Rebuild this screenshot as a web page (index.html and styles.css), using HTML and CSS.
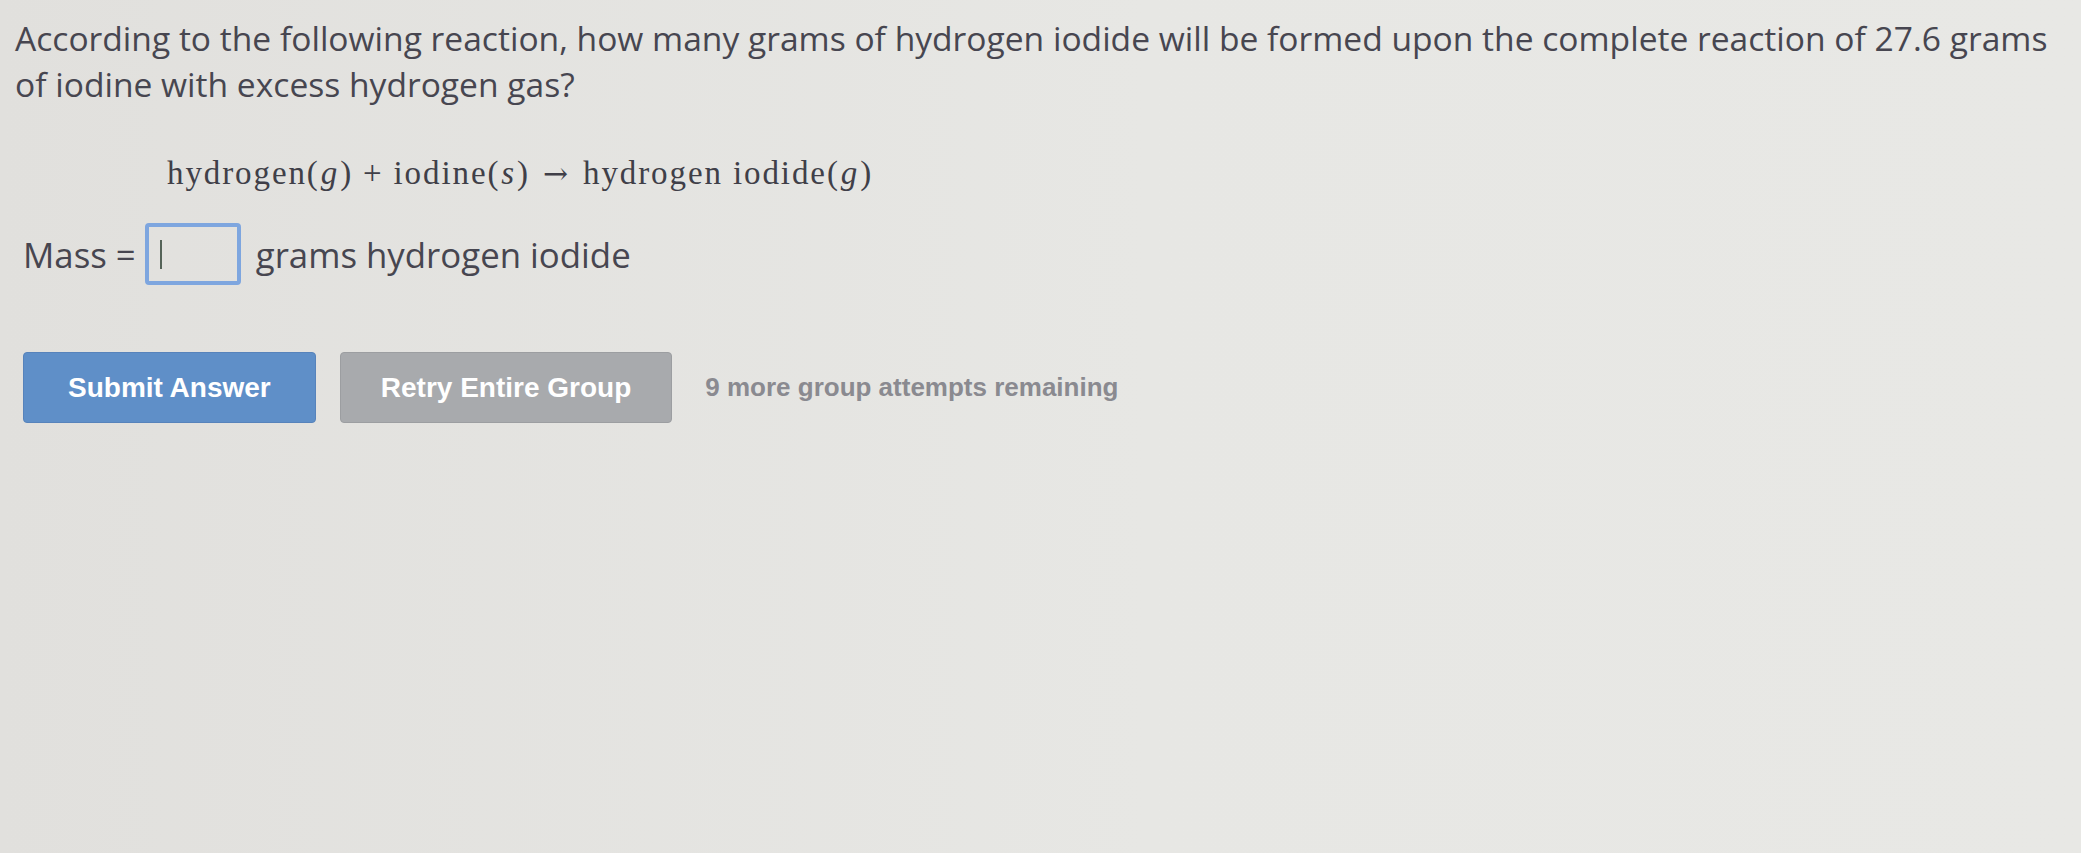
FILE: index.html
```html
<!DOCTYPE html>
<html lang="en">
<head>
<meta charset="UTF-8">
<meta name="viewport" content="width=device-width, initial-scale=1.0">
<title>Question</title>
<link rel="stylesheet" href="styles.css">
</head>
<body>

<div class="question">
    <p class="prompt">According to the following reaction, how many grams of hydrogen iodide will be formed upon the complete reaction of 27.6 grams of iodine with excess hydrogen gas?</p>

    <div class="equation">hydrogen(<i>g</i>)<span class="op">+</span>iodine(<i>s</i>)<span class="rel">&rarr;</span>hydrogen iodide(<i>g</i>)</div>

    <div class="answer-row">
        <span class="label">Mass =</span>
        <div class="answer-box"><span class="caret"></span></div>
        <span class="unit">grams hydrogen iodide</span>
    </div>

    <div class="actions">
        <button class="btn btn-submit">Submit Answer</button>
        <button class="btn btn-retry">Retry Entire Group</button>
        <span class="attempts">9 more group attempts remaining</span>
    </div>
</div>

</body>
</html>
```

FILE: styles.css
```css
body {
    margin: 0;
    padding: 0;
    height: 100vh;
    font-family: "Open Sans", sans-serif;
    color: #474650;
    background: linear-gradient(to right, #e1e0dd, #e7e7e4 55%, #e8e8e5);
}
.question {
    padding: 15px 0 0 15px;
}
.prompt {
    margin: 0;
    width: 2045px;
    font-size: 33.6px;
    line-height: 46px;
}
.equation {
    margin: 43px 0 0 152px;
    font-family: "Liberation Serif", serif;
    font-size: 33px;
    line-height: 46px;
    letter-spacing: 1.9px;
    color: #403f48;
}
.equation i {
    padding: 0 1px;
}
.equation .op {
    margin: 0 10px;
}
.equation .rel {
    margin: 0 13px;
    font-family: "DejaVu Serif", serif;
    font-size: 30px;
}
.answer-row {
    display: flex;
    align-items: center;
    margin: 26px 0 0 8px;
    font-size: 34.8px;
}
.answer-box {
    width: 88px;
    height: 54px;
    margin: 0 15px 0 9px;
    border: 4px solid #7ea6df;
    border-radius: 4px;
    display: flex;
    align-items: center;
}
.caret {
    width: 2px;
    height: 29px;
    margin-left: 11px;
    background-color: #556358;
}
.actions {
    display: flex;
    align-items: center;
    margin: 67px 0 0 8px;
}
.btn {
    height: 71px;
    border: 1px solid transparent;
    border-radius: 4px;
    font-family: "Liberation Sans", Arial, sans-serif;
    font-weight: bold;
    font-size: 28px;
    color: #ffffff;
}
.btn-submit {
    padding: 0 44px;
    background-color: #5f8fc8;
    border-color: #5783bb;
}
.btn-retry {
    margin-left: 24px;
    padding: 0 40px;
    background-color: #a8aaad;
    border-color: #9c9ea1;
}
.attempts {
    margin-left: 33px;
    font-family: "Liberation Sans", Arial, sans-serif;
    font-weight: bold;
    font-size: 26px;
    color: #8a8a90;
}
```
